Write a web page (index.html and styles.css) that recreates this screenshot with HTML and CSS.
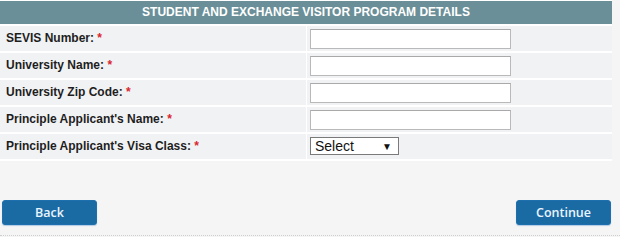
FILE: index.html
```html
<!DOCTYPE html>
<html>
<head>
<meta charset="utf-8">
<link rel="stylesheet" href="styles.css">
</head>
<body>
<div class="page">
  <div class="panel">
    <div class="header">STUDENT AND EXCHANGE VISITOR PROGRAM DETAILS</div>
    <div class="row"><div class="label">SEVIS Number: <span class="req">*</span></div><div class="field"><input class="text" type="text"></div></div>
    <div class="row"><div class="label">University Name: <span class="req">*</span></div><div class="field"><input class="text" type="text"></div></div>
    <div class="row"><div class="label">University Zip Code: <span class="req">*</span></div><div class="field"><input class="text" type="text"></div></div>
    <div class="row"><div class="label">Principle Applicant's Name: <span class="req">*</span></div><div class="field"><input class="text" type="text"></div></div>
    <div class="row"><div class="label">Principle Applicant's Visa Class: <span class="req">*</span></div><div class="field"><div class="select"><span>Select</span><span class="arrow">▼</span></div></div></div>
  </div>
  <div class="actions">
    <button class="btn">Back</button>
    <button class="btn">Continue</button>
  </div>
  <div class="rule"></div>
</div>
</body>
</html>
```
FILE: styles.css
```css
html, body { margin: 0; padding: 0; }
body { background: #f5f5f5; font-family: "Liberation Sans", Arial, sans-serif; }
.page { width: 620px; height: 237px; }
.panel { width: 612px; background: #fff; padding-top: 1px; padding-bottom: 2px; }
.header { height: 23px; line-height: 23px; background: #6a8f98; color: #fff; font-weight: bold; font-size: 12px; text-align: center; }
.row { display: flex; margin-top: 2px; height: 25px; }
.label { width: 300px; background: #f1f2f4; padding-left: 6px; font-weight: bold; font-size: 12px; color: #1e1e1e; line-height: 25px; }
.req { color: #d9262c; }
.field { flex: 1; margin-left: 1px; background: #f1f2f4; display: flex; align-items: center; padding-left: 3px; }
.text { box-sizing: border-box; width: 201px; height: 20px; border: 1px solid #b9b9b9; border-top-color: #a9a9a9; background: #fff; margin: 0; padding: 0; }
.select { box-sizing: border-box; width: 89px; height: 18px; border: 1px solid #7a7a7a; background: #fff; display: flex; align-items: center; justify-content: space-between; padding: 0 6px 0 4px; font-size: 14px; color: #111; margin-top: -1px; }
.arrow { font-size: 10px; }
.actions { display: flex; justify-content: space-between; padding: 39px 9px 0 2px; }
.btn { width: 95px; height: 25px; border: 1px solid #1d70ad; border-radius: 3px; background: #1a6aa3; color: #eaf5ff; font-family: "Open Sans", sans-serif; font-size: 12.5px; font-weight: 600; padding: 0; box-shadow: 0 1px 1px rgba(80,140,200,0.4); }
.rule { margin-top: 10px; border-top: 1px dotted #cfcfcf; }
```
